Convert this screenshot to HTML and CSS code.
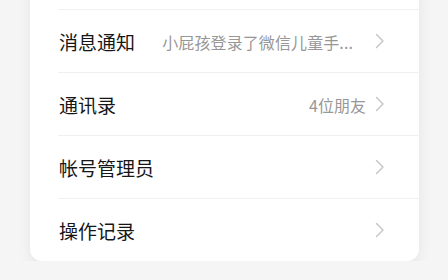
FILE: index.html
```html
<!DOCTYPE html>
<html lang="zh-CN">
<head>
    <meta charset="UTF-8">
    <meta name="viewport" content="width=device-width, initial-scale=1.0">
    <title>设置</title>
    <link rel="stylesheet" href="styles.css">
</head>
<body>
    <div class="card">
        <div class="row">
            <span class="label">消息通知</span>
            <span class="value value-long">小屁孩登录了微信儿童手...</span>
            <svg class="arrow" width="10" height="16" viewBox="0 0 10 16"><path d="M1.5 1.5 L8 8 L1.5 14.5" fill="none" stroke="#c8c8c8" stroke-width="1.5" stroke-linecap="round" stroke-linejoin="round"/></svg>
        </div>
        <div class="row">
            <span class="label">通讯录</span>
            <span class="value">4位朋友</span>
            <svg class="arrow" width="10" height="16" viewBox="0 0 10 16"><path d="M1.5 1.5 L8 8 L1.5 14.5" fill="none" stroke="#c8c8c8" stroke-width="1.5" stroke-linecap="round" stroke-linejoin="round"/></svg>
        </div>
        <div class="row">
            <span class="label">帐号管理员</span>
            <span class="value"></span>
            <svg class="arrow" width="10" height="16" viewBox="0 0 10 16"><path d="M1.5 1.5 L8 8 L1.5 14.5" fill="none" stroke="#c8c8c8" stroke-width="1.5" stroke-linecap="round" stroke-linejoin="round"/></svg>
        </div>
        <div class="row">
            <span class="label">操作记录</span>
            <span class="value"></span>
            <svg class="arrow" width="10" height="16" viewBox="0 0 10 16"><path d="M1.5 1.5 L8 8 L1.5 14.5" fill="none" stroke="#c8c8c8" stroke-width="1.5" stroke-linecap="round" stroke-linejoin="round"/></svg>
        </div>
    </div>
</body>
</html>
```

FILE: styles.css
```css
body {
    margin: 0;
    background-color: #f5f5f5;
    font-family: "Noto Sans CJK SC", "Noto Sans", sans-serif;
}
.card {
    margin: -20px 29px 0 30px;
    padding-top: 29px;
    background-color: #fff;
    border-radius: 12px;
    box-shadow: 0 4px 14px rgba(0,0,0,0.07);
}
.row {
    display: flex;
    align-items: center;
    height: 62px;
    margin-left: 28px;
    padding-right: 34px;
    border-top: 1px solid #f0f0f0;
}
.label {
    font-size: 19px;
    color: #161616;
    padding-left: 1px;
    padding-top: 1px;
}
.value {
    flex: 1;
    text-align: right;
    font-size: 16px;
    color: #979797;
    padding-top: 1px;
    margin-right: 9px;
}
.value-long {
    margin-right: 22px;
    letter-spacing: 0.1px;
}
.arrow {
    flex-shrink: 0;
}
```
